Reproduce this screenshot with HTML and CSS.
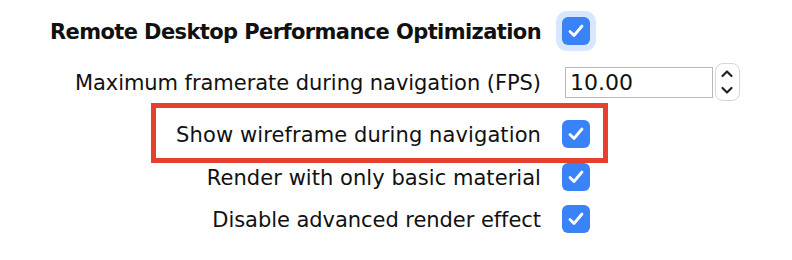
FILE: index.html
```html
<!DOCTYPE html>
<html>
<head>
<meta charset="utf-8">
<link rel="stylesheet" href="styles.css">
</head>
<body>
<div class="panel">
  <div class="form">
    <div class="label bold">Remote Desktop Performance Optimization</div>
    <div class="ctrl"><span class="ring"><span class="check"><svg viewBox="0 0 28 28" width="28" height="28"><path d="M8 14.5 L12 18.5 L20 9" /></svg></span></span></div>

    <div class="label">Maximum framerate during navigation (FPS)</div>
    <div class="ctrl spin-ctrl">
      <span class="input">10.00</span>
      <span class="spinner">
        <svg viewBox="0 0 24 38" width="24" height="38"><path d="M7.5 13 L12 8.5 L16.5 13" /><path d="M7.5 25 L12 29.5 L16.5 25" /></svg>
      </span>
    </div>

    <div class="label wide">Show wireframe during navigation</div>
    <div class="ctrl"><span class="check"><svg viewBox="0 0 28 28" width="28" height="28"><path d="M8 14.5 L12 18.5 L20 9" /></svg></span></div>

    <div class="label mid">Render with only basic material</div>
    <div class="ctrl"><span class="check"><svg viewBox="0 0 28 28" width="28" height="28"><path d="M8 14.5 L12 18.5 L20 9" /></svg></span></div>

    <div class="label">Disable advanced render effect</div>
    <div class="ctrl"><span class="check"><svg viewBox="0 0 28 28" width="28" height="28"><path d="M8 14.5 L12 18.5 L20 9" /></svg></span></div>
  </div>
  <div class="highlight"></div>
</div>
</body>
</html>
```
FILE: styles.css
```css
html, body {
  margin: 0;
  padding: 0;
  background: #ffffff;
}
body {
  width: 792px;
  height: 260px;
  overflow: hidden;
  font-family: "DejaVu Sans", "Liberation Sans", sans-serif;
  color: #111111;
}
.panel {
  position: relative;
  width: 792px;
  height: 260px;
}
.form {
  display: grid;
  grid-template-columns: 541px 200px;
  grid-template-rows: 42px 60px 44px 42px 42px;
  column-gap: 15px;
  padding-top: 10px;
  align-items: center;
}
.label {
  text-align: right;
  font-size: 21px;
  line-height: 26px;
  white-space: nowrap;
  letter-spacing: -0.05px;
  padding-top: 2px;
}
.wide {
  letter-spacing: 0.1px;
}
.mid {
  letter-spacing: 0.05px;
}
.bold {
  font-weight: bold;
  letter-spacing: -0.6px;
}
.ctrl {
  display: flex;
  align-items: center;
  padding-left: 6px;
}
.ring {
  display: flex;
  align-items: center;
  justify-content: center;
  width: 40px;
  height: 40px;
  margin-left: -6px;
  border-radius: 11px;
  background: #d8e7fd;
}
.check {
  display: flex;
  width: 28px;
  height: 28px;
  border-radius: 6px;
  background: #3a82f7;
}
.check svg path {
  fill: none;
  stroke: #ffffff;
  stroke-width: 2.8;
  stroke-linecap: round;
  stroke-linejoin: round;
}
.spin-ctrl {
  padding-left: 9px;
  gap: 2px;
}
.input {
  box-sizing: border-box;
  width: 148px;
  height: 31px;
  border: 1px solid #b9b9b9;
  font-size: 22px;
  line-height: 29px;
  padding-left: 4px;
  color: #111111;
}
.spinner {
  box-sizing: border-box;
  display: flex;
  width: 25px;
  height: 38px;
  border: 1px solid #d6d6d6;
  border-radius: 8px;
  align-items: center;
  justify-content: center;
}
.spinner svg {
  margin-left: -1px;
}
.spinner svg path {
  fill: none;
  stroke: #222222;
  stroke-width: 2.2;
  stroke-linecap: round;
  stroke-linejoin: round;
}
.highlight {
  position: absolute;
  left: 151px;
  top: 103px;
  width: 447px;
  height: 50px;
  border: 5px solid #e5412d;
}
```
